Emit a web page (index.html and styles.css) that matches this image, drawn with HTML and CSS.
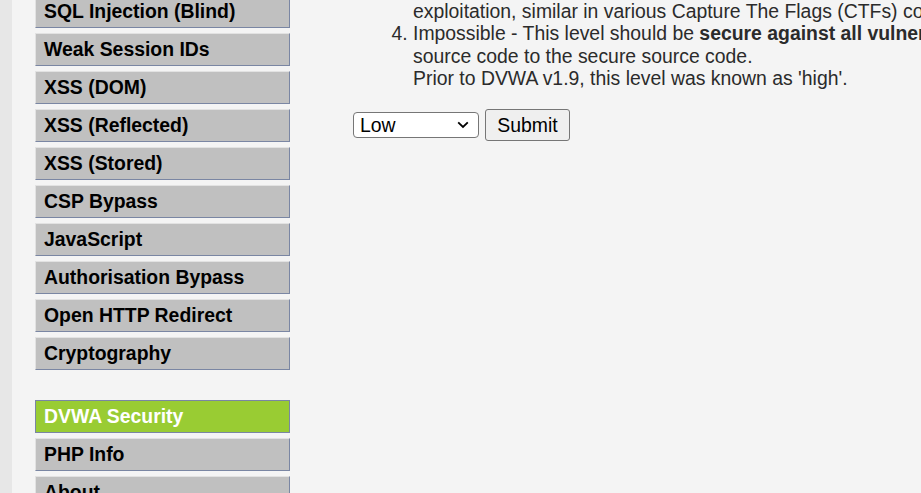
FILE: index.html
```html
<!DOCTYPE html>
<html lang="en">

<head>
    <meta charset="UTF-8">
    <meta name="viewport" content="width=device-width, initial-scale=1.0">
    <title>DVWA Security</title>

    <link rel="stylesheet" href="styles.css">
</head>

<body>
    <div class="page">
        <div class="sidebar">
            <ul class="menu menu-top">
                <li><a href="#">SQL Injection (Blind)</a></li>
                <li><a href="#">Weak Session IDs</a></li>
                <li><a href="#">XSS (DOM)</a></li>
                <li><a href="#">XSS (Reflected)</a></li>
                <li><a href="#">XSS (Stored)</a></li>
                <li><a href="#">CSP Bypass</a></li>
                <li><a href="#">JavaScript</a></li>
                <li><a href="#">Authorisation Bypass</a></li>
                <li><a href="#">Open HTTP Redirect</a></li>
                <li><a href="#">Cryptography</a></li>
            </ul>

            <ul class="menu">
                <li class="selected"><a href="#">DVWA Security</a></li>
                <li><a href="#">PHP Info</a></li>
                <li><a href="#">About</a></li>
            </ul>
        </div>

        <div class="main">
            <ol class="levels" start="3">
                <li>High - This option is an extension to the medium difficulty, with a mixture of <em>harder or alternative bad practices</em> to attempt to secure the code. The vulnerability may not allow the same extent of the exploitation, similar in various Capture The Flags (CTFs) competitions.</li>
                <li>Impossible - This level should be <em>secure against all vulnerabilities</em>. It is used to compare the vulnerable source code to the secure source code.<br>
                    Prior to DVWA v1.9, this level was known as 'high'.</li>
            </ol>

            <form class="security-form" action="#" method="POST">
                <span class="select-wrap">
                    <select name="security" class="level-select">
                        <option value="low" selected>Low</option>
                        <option value="medium">Medium</option>
                        <option value="high">High</option>
                        <option value="impossible">Impossible</option>
                    </select>
                    <svg class="select-arrow" width="12" height="8" viewBox="0 0 12 8">
                        <path d="M1.2 1.3 L6 6 L10.8 1.3" fill="none" stroke="#000" stroke-width="1.8" />
                    </svg>
                </span>
                <input type="submit" value="Submit" name="seclev_submit" class="submit-btn">
            </form>
        </div>
    </div>
</body>

</html>
```

FILE: styles.css
```css
body {
    margin: 0;
    background-color: #e7e7e7;
    font-family: "Liberation Sans", Arial, sans-serif;
    font-size: 19.4px;
    color: #2b2b2b;
}

.page {
    display: flex;
    margin-left: 12px;
    height: 100vh;
    overflow: hidden;
    background-color: #f4f4f4;
}

/* left menu */

.sidebar {
    flex: none;
    width: 255px;
    padding-left: 23px;
}

.menu {
    list-style: none;
    margin: 0 0 30px 0;
    padding: 0;
}

.menu-top {
    margin-top: -5px;
}

.menu li {
    margin-bottom: 5px;
}

.menu a {
    display: block;
    padding: 4px 8px 5px 8px;
    line-height: 22px;
    background-color: #c0c0c0;
    color: #000;
    font-weight: bold;
    text-decoration: none;
    border: 1px solid;
    border-color: #e2e2e2 #7a86a3 #7a86a3 #e2e2e2;
}

.menu li.selected a {
    background-color: #99cc33;
    color: #fff;
    border-color: #7a86a3;
}

/* content */

.main {
    flex: none;
    width: 974px;
    margin-left: 63px;
}

.levels {
    margin: -45px 0 20px 0;
    padding-left: 60px;
    line-height: 22.4px;
}

.levels em {
    font-style: normal;
    font-weight: bold;
}

.security-form {
    display: flex;
    align-items: center;
    gap: 6px;
}

.select-wrap {
    position: relative;
    display: flex;
}

.level-select {
    appearance: none;
    width: 126px;
    height: 26px;
    padding: 0 6px;
    font-family: inherit;
    font-size: 19.4px;
    color: #000;
    background-color: #fff;
    border: 1px solid #767676;
    border-radius: 4px;
}

.select-arrow {
    position: absolute;
    right: 10px;
    top: 9px;
    pointer-events: none;
}

.submit-btn {
    width: 85px;
    height: 32px;
    padding: 0 11px;
    font-family: inherit;
    font-size: 19.4px;
    color: #000;
    background-color: #efefef;
    border: 1px solid #767676;
    border-radius: 3px;
}
```
